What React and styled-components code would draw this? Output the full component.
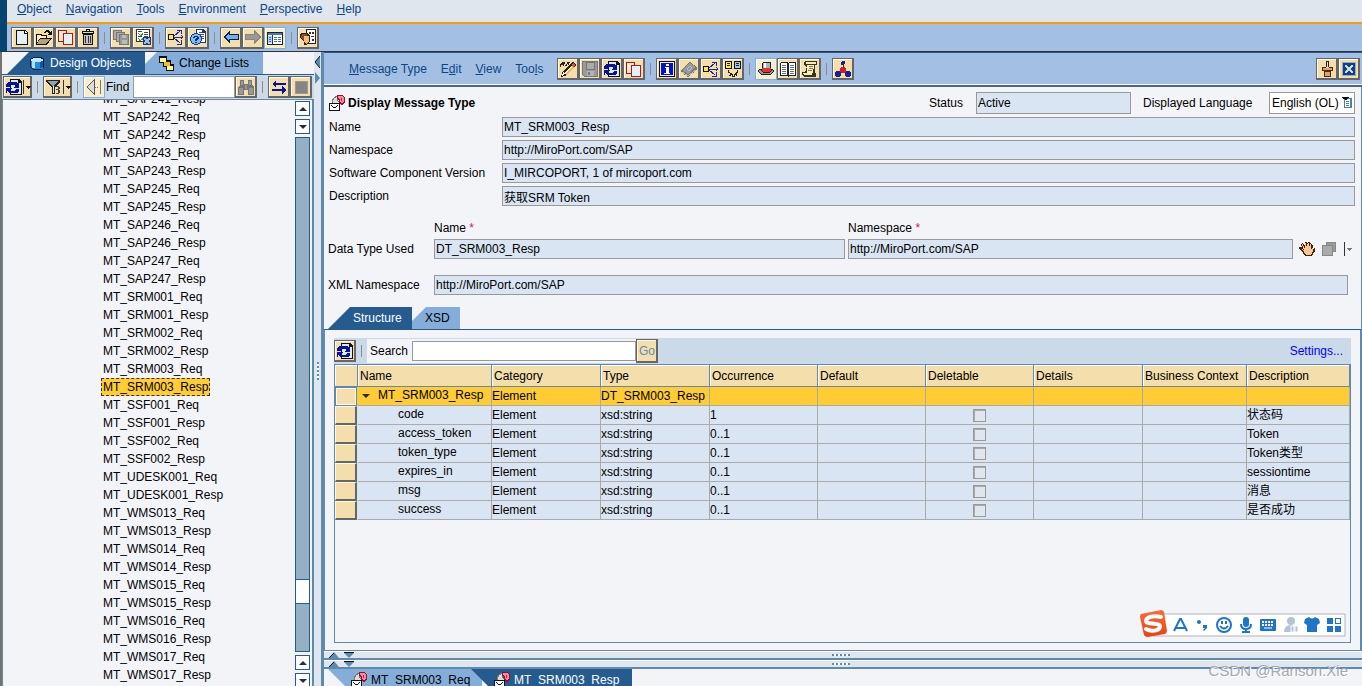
import React, { useState } from "react";
import styled, { createGlobalStyle } from "styled-components";

const GlobalStyle = createGlobalStyle`
  * {
    box-sizing: border-box;
  }
  body {
    margin: 0;
    overflow: hidden;
    background: #f3f4f8;
    color: #000;
  }
  body, button, input, select, table {
    font-family: "Liberation Sans", Arial, "Noto Sans CJK SC", sans-serif;
    font-size: 12px;
    line-height: 16px;
  }
`;

const steel = "#5f8ab0";
const navy = "#255b8f";

const icons = {
  page: (
    <>
      <path d="M2 1h9l3 3v12H2z" fill="#111" />
      <path d="M3 2h7v3h3v10H3z" fill="#e4f0f8" />
      <path d="M11 2v2h2z" fill="#fff" />
    </>
  ),
  folder: (
    <>
      <path d="M0 5h5l1 1h5v3h5l-5 7H0z" fill="#111" />
      <path d="M1 6h3l1 1h5v2H4l-3 5z" fill="#fff0c0" />
      <path d="M4 10h10l-4 5H1z" fill="#b5a276" />
      <path d="M8 3h1V2h1V1h3v1h1v1h1V2h1v4h-4V5h1V4h-1V3h-2v1H8z" fill="#111" />
    </>
  ),
  copy: (
    <>
      <path d="M0 1h9v12H0z" fill="#9b1c1c" />
      <path d="M1 2h7v10H1z" fill="#f7ead0" />
      <path d="M5 4h10v12H5z" fill="#b01818" />
      <path d="M6 5h8v10H6z" fill="#e4f0f8" />
    </>
  ),
  trash: (
    <>
      <path d="M6 0h4v2h4v3h-1v11H3V5H2V2h4z" fill="#111" />
      <path d="M7 1h2v1H7zM3 3h10v1H3z" fill="#d8d8d8" />
      <path d="M4 6h8v9H4z" fill="#c2c2c2" />
      <path d="M5 7h1v7H5zM8 7h1v7H8zM10 7h1v7h-1z" fill="#333" />
    </>
  ),
  stack: (
    <>
      <path d="M0 1h9v10H0z" fill="#777" />
      <path d="M1 2h7v8H1z" fill="#aaa" />
      <path d="M3 3h9v10H3z" fill="#777" />
      <path d="M4 4h7v8H4z" fill="#aaa" />
      <path d="M6 5h10v11H6z" fill="#777" />
      <path d="M7 6h8v9H7z" fill="#999" />
      <path d="M9 6h4v3H9zM9 11h5v4H9z" fill="#bbb" />
    </>
  ),
  check: (
    <>
      <path d="M1 0h14v13H1z" fill="#333" />
      <path d="M2 1h12v11H2z" fill="#fff" />
      <path d="M3 2h4v1H3zM9 3h4v1H9zM9 5h4v1H9zM3 7h4v1H3zM9 7h4v1H9z" fill="#444" />
      <path d="M3 4h1v1h1v1h1V5h1V4h1v2H7v1H5V6H4V5H3zM3 9h1v1h1v1h1v-1h1V9h1v2H6v1H4v-2H3z" fill="#2a9d2a" />
      <path d="M8 8h8v8H8z" fill="#173a80" />
      <path d="M9 9h2v1h2V9h2v2h-1v2h1v2h-2v-1h-2v1H9v-2h1v-2H9z" fill="#9dbfe8" />
    </>
  ),
  spread: (
    <>
      <path d="M6 7l6-5M9 1h4v4M6 8h9M13 6l2 2-2 2M6 9l6 5M9 15h4v-4" fill="none" stroke="#1b2a9b" />
      <path d="M0 5h6v6H0z" fill="#111" />
      <path d="M1 6h4v4H1z" fill="#ffe94a" />
    </>
  ),
  helpPage: (
    <>
      <path d="M6 0h7l3 3v11H6z" fill="#173a80" />
      <path d="M7 1h5v3h3v9H7z" fill="#fff" />
      <path d="M9 3h3v1H9zM10 5h4v1h-4zM11 7h3v1h-3zM12 9h2v1h-2z" fill="#555" />
      <circle cx="6" cy="10" r="6" fill="#173a80" />
      <circle cx="6" cy="10" r="5" fill="#7cc0f0" />
      <path d="M4 7h4v1h1v2H8v1H7v1H5v-2h1V9h1V8H5v1H3V8h1zM5 13h2v1H5z" fill="#102a90" />
    </>
  ),
  left: (
    <>
      <path d="M0 8l7-7v4h9v6H7v4z" fill="#111a50" />
      <path d="M2 8l4-4v2h9v4H6v2z" fill="#6ab4f0" />
    </>
  ),
  right: (
    <>
      <path d="M16 8L9 1v4H0v6h9v4z" fill="#858585" />
      <path d="M14 8l-4-4v2H1v4h9v2z" fill="#999" />
    </>
  ),
  layout: (
    <>
      <path d="M0 2h16v13H0z" fill="#222" />
      <path d="M1 5h14v9H1z" fill="#fff" />
      <path d="M1 3h14v2H1z" fill="#3f78cc" />
      <path d="M1 6h4v7H1z" fill="#b7d4f2" />
      <path d="M2 7h2v1H2zM2 9h2v1H2zM2 11h2v1H2zM7 7h3v1H7zM11 7h3v1h-3zM7 9h3v1H7zM11 9h3v1h-3zM7 11h3v1H7zM11 11h3v1h-3z" fill="#3971b5" />
      <path d="M5 5h1v9H5z" fill="#333" />
    </>
  ),
  person: (
    <>
      <path d="M6 0h10v15H6z" fill="#222" />
      <path d="M7 1h8v13H7z" fill="#fff" />
      <path d="M9 3h2v2H9zM12 3h2v2h-2zM11 7h3v1h-3zM12 10h2v2h-2z" fill="#333" />
      <path d="M1 4h7l2 3v5l-3 4H4v-3L0 9V6z" fill="#38200c" />
      <path d="M4 7h5v5l-3 3-2-3z" fill="#f2bd7d" />
      <path d="M2 5h5v2H4v4L1 9V6z" fill="#825023" />
    </>
  ),
  refresh: (
    <>
      <path d="M4 0h9l3 3v13H4z" fill="#111" />
      <path d="M5 1h7v3h3v11H5z" fill="#dceaf5" />
      <path d="M2 3h8l2 2V3h1v6H7l2-2-1-1H5L3 8H0V5z" fill="#0a119c" />
      <path d="M11 14H3l-2-2v2H0V9h6l-2 2 1 1h3l2-2h3v2z" fill="#0a119c" />
    </>
  ),
  filter: (
    <>
      <path d="M0 1h14v2L9 8v7H6V8L0 3z" fill="#222" />
      <path d="M2 2h10L8 7H6z" fill="#8ba3b5" />
      <path d="M7 7h1v7H7z" fill="#dbe8ef" />
      <path d="M10 7h3v1h1v2h-1v1h1v3h-1v1h-3v-1h2v-3h-2v-1h2V8h-2z" fill="#444" />
    </>
  ),
  collapse: (
    <>
      <path d="M1 8l7-7v14z" fill="#ddd" stroke="#555" />
      <path d="M9 8h1v1H9zM11 8h1v1h-1zM14 1h1v14h-1z" fill="#777" />
    </>
  ),
  binoculars: (
    <>
      <path d="M2 1h4v4h4V1h4v5l2 2v8h-6v-5H6v5H0V8l2-2z" fill="#777" />
      <path d="M3 2h2v4H3zM11 2h2v4h-2zM1 9h4v6H1zM11 9h4v6h-4zM7 6h2v4H7z" fill="#999" />
    </>
  ),
  swap: (
    <>
      <path d="M4 4h11v2H4zM1 10h11v2H1z" fill="#08129b" />
      <path d="M5 1v8L1 5zM11 7v8l4-4z" fill="#08129b" />
    </>
  ),
  stop: <path d="M2 2h12v12H2z" fill="#858585" stroke="#999" />,
  pencil: (
    <>
      <path d="M0 3h1V2h1V1h3v2H4v2H3V4H1v2H0zM5 4h1V3h1V1h3v1H9v2H8V3H7v2H5z" fill="#222" />
      <path d="M13 1l3 3-9 10-6 2 2-6z" fill="#222" />
      <path d="M12 4l2 2-8 8-2-2z" fill="#f4ac51" />
      <path d="M11 5l1 1-7 7-1-1z" fill="#fff3b0" />
      <path d="M13 2l2 2-1 2-3-2z" fill="#e4513a" />
      <path d="M3 11l2 2-3 2z" fill="#fff" />
    </>
  ),
  save: (
    <>
      <path d="M0 0h16v16H2l-2-2z" fill="#777" />
      <path d="M1 1h14v14H2l-1-1z" fill="#999" />
      <path d="M4 1h8v7H4z" fill="#aaa" stroke="#777" />
      <path d="M5 10h7v5H5z" fill="#b5b5b5" />
      <path d="M6 11h2v3H6z" fill="#777" />
    </>
  ),
  info: (
    <>
      <path d="M0 0h16v16H0z" fill="#111" />
      <path d="M1 1h14v14H1z" fill="#eee" />
      <path d="M2 2h12v12H2z" fill="#0710d0" />
      <path d="M7 3h3v2H7zM6 6h4v6h1v1H5v-1h2V7H6z" fill="#fff" />
    </>
  ),
  book: (
    <>
      <path d="M0 9l9-8 7 5v3l-9 7-7-5z" fill="#777" />
      <path d="M1 9l8-7 6 4-8 7z" fill="#999" />
      <path d="M1 11l6 4 8-6M6 8l3-3 2 2-3 3z" fill="none" stroke="#bbb" />
    </>
  ),
  compare: (
    <>
      <path d="M0 0h7v8H0zM9 0h7v8H9z" fill="#111" />
      <path d="M1 1h5v6H1z" fill="#ffe94a" />
      <path d="M10 1h5v6h-5z" fill="#92cdf4" />
      <path d="M2 2h3v1H2zM2 4h3v1H2zM11 2h3v1h-3zM11 4h3v1h-3z" fill="#222" />
      <path d="M3 9h1v2h1v1H3zM12 9h1v3h-2v-1h1zM4 14h1v-2h2v1h1v2h1v-2h1v-1h2v3h-1v-1h-1v2H7v-2H6v1H4z" fill="#222" />
    </>
  ),
  hat: (
    <>
      <path d="M5 1h7l1 1v6h2l1 2-3 4H4l-4-3V9l2-1h2V2z" fill="#222" />
      <path d="M5 2h7v5H5z" fill="#9fb5c4" />
      <path d="M6 2h2v5H6z" fill="#fff" />
      <path d="M4 7h9v3l-2 1H5l-1-1z" fill="#f02b2b" />
      <path d="M1 9h2l2 3h7l2-3h1v1l-3 3H4l-3-2z" fill="#8c9fa9" />
    </>
  ),
  openBook: (
    <>
      <path d="M1 1h6l1 1 1-1h7v14H9l-1 1-1-1H0V2z" fill="#222" />
      <path d="M1 2h6v12H1zM9 2h6v12H9z" fill="#fff" />
      <path d="M2 4h4v1H2zM2 6h4v1H2zM2 8h4v1H2zM2 10h4v1H2zM2 12h4v1H2zM10 4h4v1h-4zM10 6h4v1h-4zM10 8h4v1h-4zM10 10h4v1h-4zM10 12h4v1h-4z" fill="#58748a" />
    </>
  ),
  scroll: (
    <>
      <path d="M3 0h12v4h-2v8h1v3l-1 1H3l-3-2v-3h3l2-5-2-1-1-3z" fill="#38351c" />
      <path d="M4 1h10v2H4zM5 4h7l-1 8H5zM1 12h9v2H2z" fill="#f3efb8" />
      <path d="M7 5h4v1H7zM7 7h4v1H7zM6 9h4v1H6z" fill="#7d7954" />
    </>
  ),
  molecule: (
    <>
      <path d="M8 2v7M8 9l-5 4M8 9l5 4" stroke="#333" />
      <circle cx="8" cy="2" r="2" fill="#12229c" />
      <circle cx="3" cy="13" r="3" fill="#12229c" />
      <circle cx="13" cy="13" r="3" fill="#12229c" />
      <circle cx="8" cy="9" r="3" fill="#d51d1d" />
    </>
  ),
  pin: (
    <>
      <path d="M7 0h3v6H7z" fill="#222" />
      <path d="M8 1h1v6H8z" fill="#ddd" />
      <path d="M3 6h4v1h3V6h4v4h-2v6H5v-6H3z" fill="#4b2c13" />
      <path d="M4 7h9v2H4zM6 11h5v4H6z" fill="#dca46b" />
    </>
  ),
  close: (
    <>
      <path d="M1 1h14v14H1z" fill="#8caed5" />
      <path d="M2 2h12v12H2z" fill="#15407b" />
      <path d="M4 4h2v1h1v1h2V5h1V4h2v2h-1v1h-1v2h1v1h1v2h-2v-1H9v-1H7v1H6v1H4v-2h1V9h1V7H5V6H4z" fill="#c7dcf6" />
    </>
  ),
  cylinder: (
    <>
      <path d="M2 3l3-1h6l3 1 1 1v8l-1 1-3 2H5l-3-2-1-1V4z" fill="#10203a" />
      <path d="M2 5h12v7l-2 2H4l-2-2z" fill="#248cda" />
      <path d="M3 6h3v7H3z" fill="#a6e3ff" />
      <path d="M11 6h3v6l-3 1z" fill="#1352a4" />
      <ellipse cx="8" cy="5" rx="6" ry="2" fill="#bfeaff" />
    </>
  ),
  layers: (
    <>
      <path d="M1 1h8v7H1zM5 5h8v7H5zM8 9h8v7H8z" fill="#111" />
      <path d="M2 3h6v4H2z" fill="#fff6a4" />
      <path d="M6 7h6v4H6z" fill="#f3bd26" />
      <path d="M9 11h6v4H9z" fill="#fff6a4" />
    </>
  ),
  message: (
    <>
      <path d="M5 3l3-2v4l3 3-4 2H3V6z" fill="#ddd" stroke="#777" />
      <path d="M8 0h5l3 3v4l-3 3-3-2V5L8 4z" fill="#8c1433" />
      <path d="M9 1h4l2 2v3l-2 2-2-1V4L9 3z" fill="#fa879b" />
      <path d="M12 3h1v3h-1z" fill="#d01b4c" />
      <path d="M0 8h11v8H0z" fill="#111" />
      <path d="M1 9h9v6H1z" fill="#fff" />
      <path d="M2 10h1v1h1v1h3v-1h1v-1h1v1H8v1H7v1H4v-1H3v-1H2z" fill="#111" />
    </>
  ),
  hand: (
    <>
      <path d="M6 1h2v1l2-1 2 2 2 1v4l2-1v3l-3 5H6l-3-5-3-2V6h3L2 3l2-1 2 3z" fill="#3c240c" />
      <path d="M3 3l1 1 2 4V2h1l1 5V3l2-1v5l1-4h1v5l2-2v4l-2 4H7l-3-5-2-1V8l3 1z" fill="#f7c797" />
    </>
  ),
  sheets: (
    <>
      <path d="M5 1h9v9H5z" fill="#999" stroke="#888" />
      <path d="M1 4h10v10H1z" fill="#aaa" stroke="#888" />
    </>
  ),
};

const Icon = ({ name }) => (
  <Svg viewBox="0 0 16 16" aria-hidden="true">
    {icons[name]}
  </Svg>
);

const Tool = ({ name, pressed, menu }) => (
  <ToolButton type="button" aria-label={name} $pressed={pressed} $menu={menu}>
    <Icon name={name} />
    {menu && (
      <DropMark viewBox="0 0 9 16">
        <path d="M1 1h1v14H1z" fill="#333" />
        <path d="M3 7h6L6 10z" fill="#111" />
      </DropMark>
    )}
  </ToolButton>
);

const ToolGroups = ({ groups, pressed = [] }) =>
  groups.map((group, i) => (
    <React.Fragment key={i}>
      {i > 0 && <Separator />}
      {group.map(name => (
        <Tool key={name} name={name} pressed={pressed.includes(name)} />
      ))}
    </React.Fragment>
  ));

// "_" goes before the accelerator letter
const MenuLabel = ({ text }) => {
  const [before, after] = text.split("_");
  return (
    <MenuButton type="button">
      {before}
      <u>{after[0]}</u>
      {after.slice(1)}
    </MenuButton>
  );
};

const pair = id => [`${id}_Req`, `${id}_Resp`];
const treeItems = [
  "MT_SAP241_Resp",
  ...[
    "MT_SAP242", "MT_SAP243", "MT_SAP245", "MT_SAP246", "MT_SAP247",
    "MT_SRM001", "MT_SRM002", "MT_SRM003", "MT_SSF001", "MT_SSF002",
    "MT_UDESK001", "MT_WMS013", "MT_WMS014", "MT_WMS015", "MT_WMS016",
    "MT_WMS017"
  ].flatMap(pair)
];

const rows = [
  { name: "code", occurrence: "1", description: "状态码" },
  { name: "access_token", occurrence: "0..1", description: "Token" },
  { name: "token_type", occurrence: "0..1", description: "Token类型" },
  { name: "expires_in", occurrence: "0..1", description: "sessiontime" },
  { name: "msg", occurrence: "0..1", description: "消息" },
  { name: "success", occurrence: "0..1", description: "是否成功" }
];

const columns = [
  ["Name", 134],
  ["Category", 109],
  ["Type", 109],
  ["Occurrence", 108],
  ["Default", 108],
  ["Deletable", 108],
  ["Details", 109],
  ["Business Context", 104],
  ["Description", null]
];

const details = [
  ["name", "Name", "MT_SRM003_Resp"],
  ["namespace", "Namespace", "http://MiroPort.com/SAP"],
  ["component", "Software Component Version", "I_MIRCOPORT, 1 of mircoport.com"],
  ["description", "Description", "获取SRM Token"]
];

const ScrollArrow = ({ down }) => (
  <ScrollButton type="button" aria-label={down ? "Scroll down" : "Scroll up"}>
    <ArrowSvg viewBox="0 0 8 4">
      <path d={down ? "M0 0h8L4 4z" : "M0 4h8L4 0z"} fill="#222b45" />
    </ArrowSvg>
  </ScrollButton>
);

const Splitter = () => (
  <HSplit>
    <SplitArrows viewBox="0 0 26 6">
      <path d="M0 6l5-6 5 6z" fill={steel} />
      <path d="M0 6l5-5" stroke="#111" />
      <path d="M15 1h10l-5 5z" fill={steel} />
      <path d="M15 0h10v1H15z" fill="#111" />
    </SplitArrows>
    <Dots />
  </HSplit>
);

const Navigator = () => {
  const [selected, setSelected] = useState("MT_SRM003_Resp");
  return (
    <LeftPanel>
      <LeftTabs>
        <SlantTab type="button" $active $size="wide">
          <Icon name="cylinder" />
          Design Objects
        </SlantTab>
        <SlantTab type="button" $size="change">
          <Icon name="layers" />
          Change Lists
        </SlantTab>
      </LeftTabs>
      <FindBar>
        <Tool name="refresh" menu />
        <Separator />
        <Tool name="filter" menu />
        <Separator />
        <Tool name="collapse" pressed />
        <FindLabel htmlFor="find">Find</FindLabel>
        <FindInput id="find" />
        <Tool name="binoculars" />
        <Separator />
        <Tool name="swap" />
        <Tool name="stop" />
      </FindBar>
      <TreeArea>
        <Tree>
          {treeItems.map(item => (
            <TreeItem key={item}>
              <TreeButton
                type="button"
                $selected={item === selected}
                onClick={() => setSelected(item)}>
                {item}
              </TreeButton>
            </TreeItem>
          ))}
        </Tree>
        <ScrollColumn>
          <ScrollArrow />
          <ScrollArrow down />
          <ScrollTrack>
            <ScrollThumb />
          </ScrollTrack>
          <ScrollArrow />
          <ScrollArrow down />
        </ScrollColumn>
      </TreeArea>
    </LeftPanel>
  );
};

const StructureTable = () => (
  <Table>
    <colgroup>
      <Col $w={23} />
      {columns.map(([label, w]) => (
        <Col key={label} $w={w} />
      ))}
    </colgroup>
    <thead>
      <tr>
        <Th aria-label="Select" />
        {columns.map(([label]) => (
          <Th key={label}>{label}</Th>
        ))}
      </tr>
    </thead>
    <tbody>
      <Row $selected>
        <SelectorCell>
          <RowSelector type="button" aria-label="Select row" $selected />
        </SelectorCell>
        <NameCell $root>
          <Twisty viewBox="0 0 8 4">
            <path d="M0 0h8L4 4z" fill="#222b45" />
          </Twisty>
          MT_SRM003_Resp
        </NameCell>
        <Td>Element</Td>
        <Td>DT_SRM003_Resp</Td>
        <Td />
        <Td />
        <Td />
        <Td />
        <Td />
        <Td />
      </Row>
      {rows.map(row => (
        <Row key={row.name}>
          <SelectorCell>
            <RowSelector type="button" aria-label={`Select ${row.name}`} />
          </SelectorCell>
          <NameCell>{row.name}</NameCell>
          <Td>Element</Td>
          <Td>xsd:string</Td>
          <Td>{row.occurrence}</Td>
          <Td />
          <Td>
            <Check type="checkbox" disabled aria-label={`${row.name} deletable`} />
          </Td>
          <Td />
          <Td />
          <Td>{row.description}</Td>
        </Row>
      ))}
    </tbody>
  </Table>
);

const InputMethodBar = () => (
  <ImeBar>
    <ImeSvg viewBox="0 0 208 28">
      <defs>
        <linearGradient id="flame" x1="0" y1="0" x2="0" y2="1">
          <stop offset="0" stopColor="#f96b3a" />
          <stop offset="1" stopColor="#e84310" />
        </linearGradient>
      </defs>
      <path d="M14 4h192v22H14z" fill="#fff" stroke="#aeb4bc" />
      <path d="M2 4L22 0q2 0 3 2l3 19q0 2-2 3L9 27q-3 0-4-2L1 7q0-2 1-3z" fill="url(#flame)" />
      <path
        d="M22 7C15 5 7 7 7 11s15 1 14 6c-1 4-9 5-14 2"
        fill="none"
        stroke="#fff"
        strokeWidth="4"
        strokeLinecap="round"
      />
      <g fill="none" stroke="#1e74c9" strokeWidth="2">
        <path d="M35 21l6-12h1l6 12M37 18h9" />
        <circle cx="85" cy="15" r="7" />
        <path d="M83 11v3M87 11v3M81 16q4 5 8 0" />
        <path d="M102 14q0 5 5 5t5-5M107 19v4M103 22h8" />
      </g>
      <g fill="#1e74c9">
        <circle cx="60" cy="12" r="2" />
        <path d="M64 15h4v3l-3 3-1-1 2-2h-2z" />
        <rect x="104" y="7" width="6" height="10" rx="3" />
        <rect x="121" y="9" width="16" height="12" rx="1" />
        <path d="M166 9l4-2q3 3 6 0l4 2 1 4-3 2v7h-10v-7l-3-2z" />
        <path d="M188 8h6v6h-6zM188 16h6v6h-6zM196 16h6v6h-6zM196 8h6v6h-6z" />
      </g>
      <path d="M123 12h12M123 15h12" stroke="#fff" strokeWidth="2" strokeDasharray="2 1" />
      <path d="M125 18h8" stroke="#fff" strokeWidth="1" />
      <path d="M197 9h4v4h-4z" fill="#fff" />
      <g fill="#b6c2d4">
        <circle cx="152" cy="11" r="4" />
        <path d="M145 22q0-7 7-7 3 0 5 2v5z" />
        <path d="M152 16h3v6h-3zM156 16h3v6h-3z" stroke="#fff" />
      </g>
    </ImeSvg>
  </ImeBar>
);

export default function App() {
  const [tab, setTab] = useState("Structure");

  return (
    <Page>
      <GlobalStyle />
      <TopArea>
        <MainMenu>
          {["_Object", "_Navigation", "_Tools", "_Environment", "_Perspective", "_Help"].map(text => (
            <MenuLabel key={text} text={text} />
          ))}
        </MainMenu>
        <MainTools>
          <ToolGroups
            groups={[
              ["page", "folder", "copy", "trash"],
              ["stack", "check"],
              ["spread", "helpPage"],
              ["left", "right", "layout"],
              ["person"]
            ]}
            pressed={["layout"]}
          />
        </MainTools>
      </TopArea>
      <Workspace>
        <Navigator />
        <VSplit>
          <SideArrows viewBox="0 0 5 30">
            <path d="M5 0v12L0 6z" fill={steel} />
            <path d="M5 0L0 6l5 6" fill="none" stroke="#111" />
            <path d="M0 16v12l5-6z" fill={steel} />
          </SideArrows>
          <Dots $vertical />
        </VSplit>
        <Editor>
          <EditorBar>
            <EditorMenu>
              {["_Message Type", "E_dit", "_View", "Too_ls"].map(text => (
                <MenuLabel key={text} text={text} />
              ))}
            </EditorMenu>
            <ToolGroups
              groups={[
                ["pencil", "save", "refresh", "copy"],
                ["info", "book", "spread", "compare"],
                ["hat", "openBook", "scroll"],
                ["molecule"]
              ]}
              pressed={["hat"]}
            />
            <Spacer />
            <Tool name="pin" />
            <Tool name="close" />
          </EditorBar>

          <Form>
            <TitleRow>
              <Icon name="message" />
              <Title>Display Message Type</Title>
              <StatusLabel htmlFor="status">Status</StatusLabel>
              <StatusField id="status" readOnly value="Active" />
              <LanguageLabel htmlFor="language">Displayed Language</LanguageLabel>
              <SelectBox>
                <Select id="language">
                  <option>English (OL)</option>
                </Select>
                <SelectMark viewBox="0 0 12 12">
                  <path d="M3 2h8v10H3z" fill="#477fad" />
                  <path d="M4 3h5v8H4z" fill="#fff" />
                  <path d="M5 5h3v1H5zM5 7h3v1H5zM5 9h3v1H5z" fill="#477fad" />
                  <path d="M1 1h7v1H7v1H6v1H4V3H2V2H1z" fill="#111" />
                </SelectMark>
              </SelectBox>
            </TitleRow>
            {details.map(([id, label, value]) => (
              <FormRow key={id}>
                <label htmlFor={id}>{label}</label>
                <Field id={id} readOnly value={value} />
              </FormRow>
            ))}
          </Form>

          <TypeGrid>
            <span />
            <label htmlFor="typeName">
              Name <Required>*</Required>
            </label>
            <label htmlFor="typeNamespace">
              Namespace <Required>*</Required>
            </label>
            <span />
            <span>Data Type Used</span>
            <Field id="typeName" readOnly value="DT_SRM003_Resp" />
            <Field id="typeNamespace" readOnly value="http://MiroPort.com/SAP" />
            <TypeActions>
              <Icon name="hand" />
              <Icon name="sheets" />
              <DropMark viewBox="0 0 9 16">
                <path d="M1 1h1v14H1z" fill="#333" />
                <path d="M3 7h6L6 10z" fill="#777" />
              </DropMark>
            </TypeActions>
          </TypeGrid>
          <XmlRow>
            <label htmlFor="xmlNamespace">XML Namespace</label>
            <Field id="xmlNamespace" readOnly value="http://MiroPort.com/SAP" />
          </XmlRow>

          <StructureTabs>
            <SlantTab
              type="button"
              $active={tab === "Structure"}
              $size="structure"
              onClick={() => setTab("Structure")}>
              Structure
            </SlantTab>
            <SlantTab
              type="button"
              $active={tab === "XSD"}
              $size="xsd"
              onClick={() => setTab("XSD")}>
              XSD
            </SlantTab>
          </StructureTabs>
          <TabPanel>
            <SearchBar>
              <Tool name="refresh" />
              <Separator />
              <SearchBox>
                <label htmlFor="search">Search</label>
                <SearchInput id="search" />
              </SearchBox>
              <GoButton type="button">Go</GoButton>
              <Spacer />
              <SettingsLink href="#settings">Settings...</SettingsLink>
            </SearchBar>
            <TableBox>
              <StructureTable />
            </TableBox>
          </TabPanel>
          <Splitter />
          <Splitter />
          <BottomTabs>
            <BottomTab type="button">
              <Icon name="message" />
              MT_SRM003_Req
            </BottomTab>
            <BottomTab type="button" $active>
              <Icon name="message" />
              MT_SRM003_Resp
            </BottomTab>
          </BottomTabs>
        </Editor>
      </Workspace>
      <InputMethodBar />
      <Watermark>CSDN @Ranson.Xie</Watermark>
    </Page>
  );
}

const Page = styled.div`
  position: relative;
  display: flex;
  flex-direction: column;
  height: 100vh;
  overflow: hidden;
`;

const TopArea = styled.header`
  border-left: 7px solid #07446f;
  border-bottom: 1px solid #333;
  background: #a3c0e4;
`;

const MainMenu = styled.nav`
  display: flex;
  gap: 14px;
  height: 24px;
  padding: 1px 10px 5px;
  background: #dfe6ee;
  border-bottom: 2px solid #ff9900;
`;

const MenuButton = styled.button`
  padding: 0;
  border: 0;
  background: none;
  color: #0d4583;
  white-space: nowrap;
`;

const MainTools = styled.div`
  display: flex;
  align-items: center;
  height: 27px;
  padding-left: 4px;
`;

const Svg = styled.svg`
  flex: none;
  display: block;
  width: 16px;
  height: 16px;
  shape-rendering: crispEdges;
`;

const DropMark = styled.svg`
  flex: none;
  width: 9px;
  height: 16px;
  shape-rendering: crispEdges;
`;

const ToolButton = styled.button`
  flex: none;
  display: flex;
  align-items: center;
  justify-content: flex-start;
  width: ${props => (props.$menu ? "29px" : "22px")};
  height: 22px;
  padding: 0 0 0 2px;
  border-style: solid;
  border-width: ${props => (props.$pressed ? "1px" : "1px 2px 2px 1px")};
  border-color: ${props => (props.$pressed ? "#85add9" : "#666")};
  background: ${props => (props.$pressed ? "#faedca" : "#f3deac")};
  box-shadow: inset 1px 1px 0 #fffbe6;
`;

const Separator = styled.span`
  flex: none;
  width: 1px;
  height: 12px;
  margin: 0 5px;
  background: #8c8c8c;
`;

const Spacer = styled.span`
  flex: 1;
`;

const Workspace = styled.main`
  flex: 1;
  display: grid;
  grid-template-columns: 314px 7px minmax(0, 1fr);
  min-height: 0;
`;

const LeftPanel = styled.section`
  display: flex;
  flex-direction: column;
  min-height: 0;
  border-left: 2px solid #77736d;
`;

const LeftTabs = styled.div`
  display: flex;
  height: 23px;
  padding-left: 5px;
  border-bottom: 1px solid ${navy};
`;

const tabShapes = {
  wide: "width: 138px; padding-left: 22px; clip-path: polygon(0 100%, 22px 0, 100% 0, 100% 100%);",
  change: "width: 118px; padding-left: 13px; clip-path: polygon(0 100%, 0 12px, 12px 0, 100% 0, 100% 100%);",
  structure: "width: 84px; padding-left: 25px; clip-path: polygon(0 100%, 22px 0, 100% 0, 100% 100%);",
  xsd: "width: 48px; padding-left: 13px; clip-path: polygon(0 100%, 0 14px, 14px 0, 100% 0, 100% 100%);"
};

const SlantTab = styled.button`
  flex: none;
  display: flex;
  align-items: center;
  gap: 5px;
  height: 22px;
  padding: 0;
  border: 0;
  background: ${props => (props.$active ? navy : "#85add9")};
  color: ${props => (props.$active ? "#fff" : "#000")};
  ${props => tabShapes[props.$size]}
`;

const FindBar = styled.div`
  display: flex;
  align-items: center;
  height: 25px;
  padding: 0 2px 0 1px;
  background: #cbdae9;
  border-bottom: 1px solid ${steel};
`;

const FindLabel = styled.label`
  width: 28px;
  padding-left: 1px;
`;

const FindInput = styled.input`
  flex: 1;
  min-width: 0;
  height: 22px;
  border: 1px solid #999;
  background: #fff;
`;

const TreeArea = styled.div`
  flex: 1;
  display: flex;
  min-height: 0;
  overflow: hidden;
  border-left: 1px solid ${steel};
  border-right: 2px solid ${steel};
`;

const Tree = styled.ul`
  flex: 1;
  margin: -10px 0 0;
  padding: 0 0 0 98px;
  list-style: none;
`;

const TreeItem = styled.li`
  display: flex;
  height: 18px;
`;

const TreeButton = styled.button`
  padding: 0 1px;
  border: 1px dashed ${props => (props.$selected ? "#333" : "transparent")};
  background: ${props => (props.$selected ? "#ffcc33" : "none")};
`;

const ScrollColumn = styled.div`
  display: flex;
  flex-direction: column;
  gap: 3px;
  width: 17px;
  margin-bottom: -2px;
  padding-top: 1px;
`;

const ScrollButton = styled.button`
  flex: none;
  display: flex;
  align-items: center;
  justify-content: center;
  width: 15px;
  height: 15px;
  padding: 0;
  border: 1px solid ${navy};
  background: #fff;
`;

const ArrowSvg = styled.svg`
  width: 8px;
  height: 4px;
`;

const ScrollTrack = styled.div`
  flex: 1;
  display: flex;
  flex-direction: column;
  width: 15px;
  border: 1px solid ${navy};
  background: #94b0c2;
  &::before {
    content: "";
    flex: 442;
  }
  &::after {
    content: "";
    flex: 47;
  }
`;

const ScrollThumb = styled.div`
  flex: none;
  height: 25px;
  border: solid ${navy};
  border-width: 1px 0;
  background: #fff;
`;

const VSplit = styled.div`
  display: flex;
  flex-direction: column;
  align-items: center;
  justify-content: space-between;
  padding-top: 4px;
  background: #dfe6ee;
  &::after {
    content: "";
    height: 30px;
  }
`;

const SideArrows = styled.svg`
  width: 5px;
  height: 30px;
`;

const Dots = styled.span`
  width: ${props => (props.$vertical ? "2px" : "18px")};
  height: ${props => (props.$vertical ? "18px" : "2px")};
  background: repeating-linear-gradient(
    ${props => (props.$vertical ? "180deg" : "90deg")},
    ${steel} 0 2px,
    #fff 2px 4px
  );
`;

const Editor = styled.section`
  display: flex;
  flex-direction: column;
  min-width: 0;
  min-height: 0;
  border-left: 3px solid ${steel};
`;

const EditorBar = styled.div`
  display: flex;
  align-items: center;
  height: 35px;
  padding: 0 2px 0 25px;
  background: #a3c0e4;
  border-top: 1px solid ${navy};
  border-bottom: 2px solid #4a6683;
  box-shadow: inset 0 -1px 0 #fff;
`;

const EditorMenu = styled.nav`
  display: flex;
  gap: 14px;
  padding-right: 14px;
`;

const Form = styled.div`
  display: grid;
  gap: 3px;
  padding: 5px 6px 0 5px;
  border-right: 1px solid ${steel};
`;

const TitleRow = styled.div`
  display: flex;
  align-items: center;
  height: 22px;
`;

const Title = styled.h1`
  margin: 0 auto 0 3px;
  font-size: 12px;
  line-height: 16px;
`;

const Field = styled.input`
  min-width: 0;
  width: 100%;
  height: 20px;
  padding: 0 1px;
  border: 1px solid #999;
  border-radius: 0;
  background: #d9e5f3;
`;

const StatusLabel = styled.label`
  width: 47px;
`;

const StatusField = styled(Field)`
  width: 155px;
  height: 22px;
`;

const LanguageLabel = styled.label`
  width: 126px;
  margin-left: 12px;
`;

const SelectBox = styled.span`
  position: relative;
  width: 86px;
  height: 22px;
`;

const Select = styled.select`
  appearance: none;
  width: 100%;
  height: 22px;
  padding: 0 2px;
  border: 1px solid #999;
  border-radius: 0;
  background: #fff;
  color: #000;
`;

const SelectMark = styled.svg`
  position: absolute;
  top: 4px;
  right: 2px;
  width: 12px;
  height: 12px;
  shape-rendering: crispEdges;
  pointer-events: none;
`;

const FormRow = styled.div`
  display: grid;
  grid-template-columns: 173px minmax(0, 1fr);
  align-items: center;
`;

const TypeGrid = styled.div`
  display: grid;
  grid-template-columns: 103px minmax(0, 411fr) minmax(0, 445fr) 52px;
  gap: 3px;
  align-items: center;
  padding: 14px 13px 0 4px;
  border-right: 1px solid ${steel};
`;

const Required = styled.span`
  color: #d4145a;
`;

const TypeActions = styled.span`
  display: flex;
  gap: 6px;
  align-items: center;
  padding-left: 3px;
  height: 16px;
`;

const XmlRow = styled.div`
  display: grid;
  grid-template-columns: 106px minmax(0, 1fr);
  align-items: center;
  padding: 16px 13px 12px 4px;
  border-right: 1px solid ${steel};
`;

const StructureTabs = styled.div`
  display: flex;
  height: 22px;
  padding-left: 4px;
  border-right: 1px solid ${steel};
`;

const TabPanel = styled.div`
  flex: 1;
  display: flex;
  flex-direction: column;
  min-height: 0;
  padding: 8px 9px 7px 9px;
  border: 1px solid ${steel};
  border-top-color: ${navy};
  border-right-width: 2px;
`;

const SearchBar = styled.div`
  display: flex;
  flex: none;
  align-items: center;
  height: 26px;
  background: #cbdae9;
`;

const SearchBox = styled.span`
  display: flex;
  align-items: center;
  gap: 4px;
  height: 24px;
  padding-left: 3px;
  background: #f3f4f8;
`;

const SearchInput = styled.input`
  width: 224px;
  height: 20px;
  border: 1px solid #999;
  background: #fff;
`;

const GoButton = styled(ToolButton)`
  height: 24px;
  color: ${steel};
`;

const SettingsLink = styled.a`
  padding-right: 8px;
  color: #0000ff;
  text-decoration: none;
`;

const TableBox = styled.div`
  flex: 1;
  min-height: 0;
  border: 1px solid ${steel};
`;

const Table = styled.table`
  width: 100%;
  table-layout: fixed;
  border-spacing: 0;
`;

const Col = styled.col`
  width: ${props => (props.$w ? `${props.$w}px` : "auto")};
`;

const Th = styled.th`
  height: 22px;
  padding: 0 2px;
  background: #f3deac;
  border-right: 1px solid ${steel};
  border-bottom: 1px solid ${steel};
  box-shadow: inset 1px 1px 0 #fff;
  font-weight: normal;
  text-align: left;
  white-space: nowrap;
`;

const Row = styled.tr`
  background: ${props => (props.$selected ? "#ffcc33" : "#d9e5f3")};
`;

const Td = styled.td`
  height: 19px;
  padding: 0;
  border-right: 1px solid #aaa;
  border-bottom: 1px solid #aaa;
  line-height: 18px;
  white-space: nowrap;
`;

const SelectorCell = styled(Td)`
  border: 0;
`;

const NameCell = styled(Td)`
  padding-left: ${props => (props.$root ? "4px" : "40px")};
  line-height: 16px;
  vertical-align: top;
`;

const RowSelector = styled.button`
  display: block;
  width: 22px;
  height: 19px;
  padding: 0;
  border-style: solid;
  border-width: ${props => (props.$selected ? "1px" : "1px 2px 2px 1px")};
  border-color: ${props => (props.$selected ? steel : "#fffbe6 #666 #666 #fffbe6")};
  background: #f3deac;
  box-shadow: ${props => (props.$selected ? "inset 0 0 0 1px #fffbe6" : "none")};
`;

const Twisty = styled.svg`
  width: 8px;
  height: 4px;
  margin-right: 8px;
  vertical-align: middle;
`;

const Check = styled.input`
  appearance: none;
  display: block;
  width: 13px;
  height: 13px;
  margin: 1px auto 0;
  border: 1px solid #999;
  background: #dfe6ee;
  box-shadow: inset 1px 1px 0 #aaa;
`;

const HSplit = styled.div`
  flex: none;
  display: flex;
  align-items: center;
  justify-content: space-between;
  height: 9px;
  padding-left: 5px;
  background: #dfe6ee;
  border-top: 1px solid #fff;
  border-bottom: 2px solid ${steel};
  &::after {
    content: "";
    width: 36px;
  }
`;

const SplitArrows = styled.svg`
  width: 26px;
  height: 6px;
`;

const BottomTabs = styled.div`
  flex: none;
  display: flex;
  height: 17px;
  padding-left: 4px;
  overflow: hidden;
`;

const BottomTab = styled.button`
  flex: none;
  display: flex;
  align-items: center;
  gap: 4px;
  width: ${props => (props.$active ? "161px" : "154px")};
  height: 21px;
  margin-left: ${props => (props.$active ? "-11px" : "0")};
  padding: 0 0 0 23px;
  border: 0;
  background: ${props => (props.$active ? navy : "#85add9")};
  color: ${props => (props.$active ? "#fff" : "#000")};
  clip-path: polygon(0 0, 100% 0, 100% 100%, 21px 100%);
`;

const ImeBar = styled.div`
  position: absolute;
  right: 15px;
  bottom: 48px;
`;

const ImeSvg = styled.svg`
  display: block;
  width: 208px;
  height: 28px;
`;

const Watermark = styled.div`
  position: absolute;
  right: 14px;
  bottom: 5px;
  color: #a3a9b0;
  font-size: 15px;
  line-height: 20px;
  text-shadow: 1px 1px 0 #fff;
`;
